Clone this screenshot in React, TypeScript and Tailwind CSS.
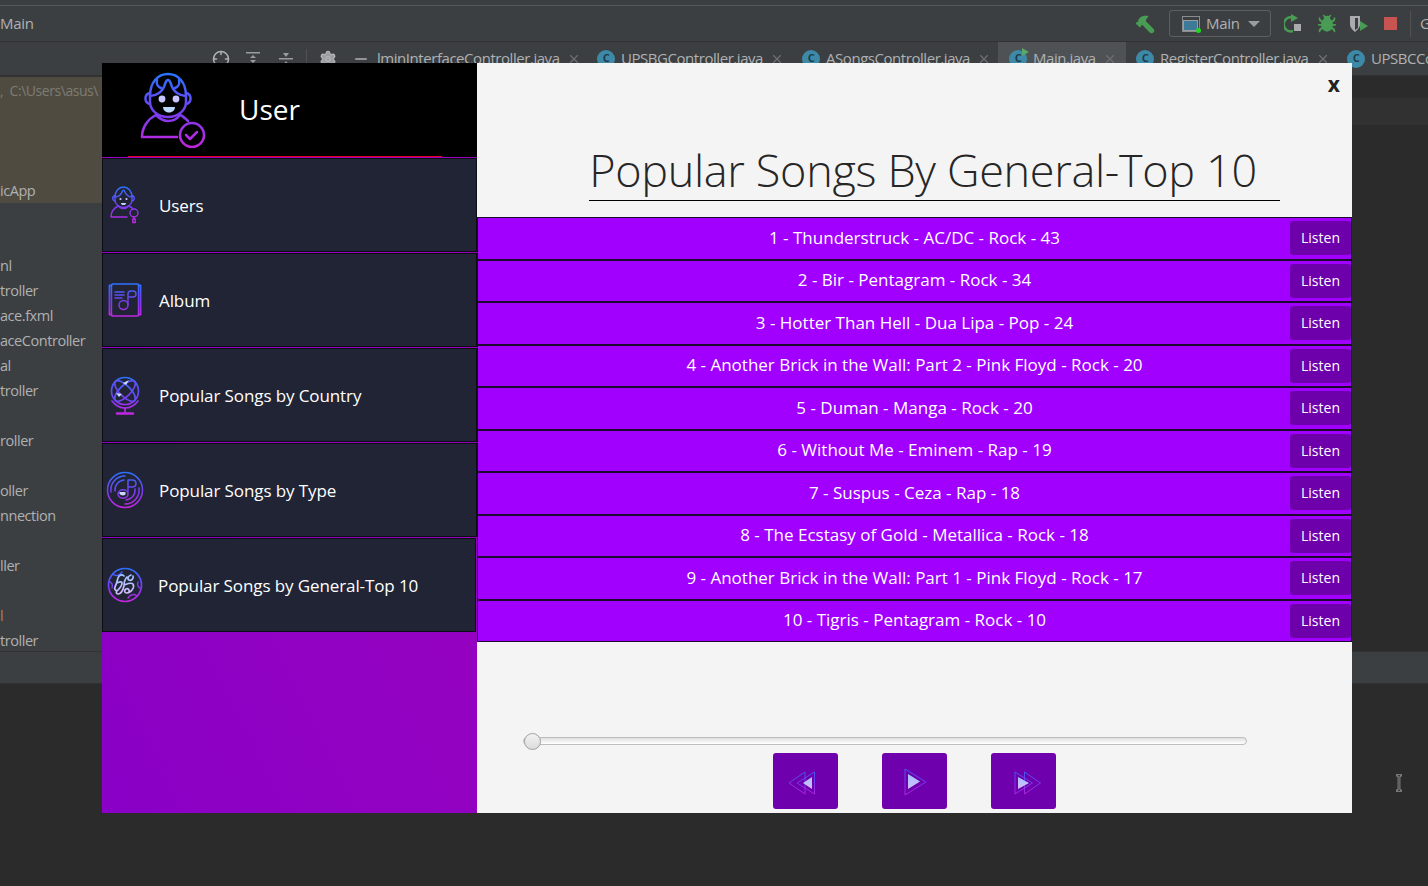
import type { ReactNode } from "react";
import { Hammer, Bug, Settings, Minus, Crosshair, X } from "lucide-react";

const songs = [
  "1 - Thunderstruck - AC/DC - Rock - 43",
  "2 - Bir - Pentagram - Rock - 34",
  "3 - Hotter Than Hell - Dua Lipa - Pop - 24",
  "4 - Another Brick in the Wall: Part 2 - Pink Floyd - Rock - 20",
  "5 - Duman - Manga - Rock - 20",
  "6 - Without Me - Eminem - Rap - 19",
  "7 - Suspus - Ceza - Rap - 18",
  "8 - The Ecstasy of Gold - Metallica - Rock - 18",
  "9 - Another Brick in the Wall: Part 1 - Pink Floyd - Rock - 17",
  "10 - Tigris - Pentagram - Rock - 10",
];

const treeRows = [
  { text: "nl", cls: "" },
  { text: "troller", cls: "" },
  { text: "ace.fxml", cls: "" },
  { text: "aceController", cls: "" },
  { text: "al", cls: "" },
  { text: "troller", cls: "" },
  { text: "", cls: "" },
  { text: "roller", cls: "" },
  { text: "", cls: "" },
  { text: "oller", cls: "" },
  { text: "nnection", cls: "" },
  { text: "", cls: "" },
  { text: "ller", cls: "" },
  { text: "", cls: "" },
  { text: "l", cls: "text-[#b0805a]" },
  { text: "troller", cls: "" },
];

const tabs = [
  { name: "lminInterfaceController.java", cls: "w-[213px] pl-0", icon: false, active: false },
  { name: "UPSBGController.java", cls: "w-[205px] pl-[7px]", icon: true, active: false },
  { name: "ASongsController.java", cls: "w-[203px] pl-[7px]", icon: true, active: false },
  { name: "Main.java", cls: "w-[128px] pl-[11px] bg-[#4e5254]", icon: true, active: true },
  { name: "RegisterController.java", cls: "w-[215px] pl-[10px]", icon: true, active: false },
  { name: "UPSBCController.java", cls: "w-[200px] pl-[6px]", icon: true, active: false },
];

function Grad({ id, y1, y2 }: { id: string; y1: number; y2: number }) {
  return (
    <defs>
      <linearGradient id={id} gradientUnits="userSpaceOnUse" x1="0" x2="0" y1={y1} y2={y2}>
        <stop offset="0" stopColor="#2a73ff" />
        <stop offset="0.55" stopColor="#7a3cf0" />
        <stop offset="1" stopColor="#c426e0" />
      </linearGradient>
      <linearGradient id={`${id}-f`} gradientUnits="userSpaceOnUse" x1="0" x2="0" y1={y1} y2={y2}>
        <stop offset="0" stopColor="#8fc7ff" />
        <stop offset="1" stopColor="#e8b8ff" />
      </linearGradient>
    </defs>
  );
}

function UserIcon() {
  return (
    <svg viewBox="0 0 66 76" className="w-[66px] h-[76px]" fill="none" stroke="url(#gu)" strokeWidth="2.500" strokeLinecap="round" strokeLinejoin="round">
      <Grad id="gu" y1={2} y2={74} />
      <path d="M10 24C10 10 18 2 28 2s18 8 18 22v6a18 15 0 0 1-36 0z" />
      <path d="M10 24c6 0 13-4 15-12 1-3 2-4 3-4s2 1 3 4c2 8 9 12 15 12" />
      <path d="M17 8c-1 4 1 7 4 8M39 8c1 4-1 7-4 8" />
      <path d="M10 21a5.600 5.600 0 0 0 0 11M46 21a5.600 5.600 0 0 1 0 11" />
      <circle cx="22" cy="27" r="3.400" fill="#c8c6ff" stroke="none" />
      <circle cx="36" cy="27" r="3.400" fill="#c8c6ff" stroke="none" />
      <path d="M23 35h12c0 3-2.500 5.500-6 5.500s-6-2.500-6-5.500z" fill="#bcd8ff" stroke="none" />
      <path d="M16 43c4 4 8 6 12 6s9-2 12-6" />
      <path d="M16 43C8 47 2 55 2 65h35M40 43c3 1 6 4 8 6" />
      <circle cx="52" cy="63" r="12" />
      <path d="M46 63l4 4 7-7" />
    </svg>
  );
}

function UsersIcon() {
  return (
    <svg viewBox="0 0 30 38" className="w-[30px] h-[38px]" fill="none" stroke="url(#gs)" strokeWidth="1.400" strokeLinecap="round" strokeLinejoin="round">
      <Grad id="gs" y1={1} y2={37} />
      <path d="M5 11C5 5 9 1 13.500 1S22 5 22 11v3a8.500 7.500 0 0 1-17 0z" />
      <path d="M5 11c3 0 6-2 7.500-6 .5-1 1.500-1 2 0 1.500 4 4.500 6 7.500 6" />
      <path d="M5 9.500a2.800 2.800 0 0 0 0 5.500M22 9.500a2.800 2.800 0 0 1 0 5.500" />
      <circle cx="10.500" cy="13" r="1.100" fill="#c8c6ff" stroke="none" />
      <circle cx="16.500" cy="13" r="1.100" fill="#c8c6ff" stroke="none" />
      <path d="M11 17h5c0 1.500-1 2-2.500 2s-2.500-.5-2.500-2z" fill="#bcd8ff" stroke="none" />
      <path d="M8 20c2 2 4 2.500 5.500 2.500S17 22 19 20" />
      <path d="M8 20c-4 2-7 5-7 11h16M19 20c1 .5 3 1.500 4 3" />
      <circle cx="24" cy="27" r="4" />
      <path d="M24 31v2" />
      <rect x="22.800" y="33" width="2.400" height="3.500" />
    </svg>
  );
}

function AlbumIcon() {
  return (
    <svg viewBox="0 0 34 34" className="w-[34px] h-[34px]" fill="none" stroke="url(#ga)" strokeWidth="1.400" strokeLinecap="round" strokeLinejoin="round">
      <Grad id="ga" y1={0} y2={34} />
      <rect x="3.500" y="1" width="27" height="32" rx="1" />
      <path d="M3.500 2.500H1.500v29h2M30.500 2.500h2v29h-2" strokeWidth="1.800" />
      <path d="M7 9h9M7 12h9M7 15h7" />
      <path d="M20 22V11c0-2 1-3 3-3h2c2 0 3 1.500 3 3s-1 3-3 3h-5" />
      <circle cx="15.500" cy="22" r="4.500" />
    </svg>
  );
}

function GlobeIcon() {
  return (
    <svg viewBox="0 0 34 40" className="w-[34px] h-[40px]" fill="none" stroke="url(#gg)" strokeWidth="1.700" strokeLinecap="round" strokeLinejoin="round">
      <Grad id="gg" y1={2} y2={40} />
      <circle cx="17" cy="16" r="13.500" />
      <ellipse cx="17" cy="16" rx="13.500" ry="5.500" transform="rotate(-45 17 16)" />
      <ellipse cx="17" cy="16" rx="13.500" ry="5.500" transform="rotate(45 17 16)" />
      <path d="M15 8l6-3-3 5z" fill="#c8d8ff" stroke="none" />
      <path d="M11 22l-3-4 6 1z" fill="#c8d8ff" stroke="none" />
      <path d="M4 26c3 4 8 7 13 7s10-3 13-7" />
      <path d="M17 33v4" />
      <path d="M9 38.500h16" strokeWidth="2.400" />
    </svg>
  );
}

function VinylIcon() {
  return (
    <svg viewBox="0 0 38 38" className="w-[38px] h-[38px]" fill="none" stroke="url(#gv)" strokeWidth="1.500" strokeLinecap="round" strokeLinejoin="round">
      <Grad id="gv" y1={1} y2={37} />
      <circle cx="19" cy="19" r="17.500" />
      <path d="M5 21A14 14 0 0 1 19 5M9 20A10 10 0 0 1 18 9" />
      <path d="M33 17A14 14 0 0 1 19 33M29 18A10 10 0 0 1 20 29" />
      <path d="M22 21V9h4c2.500 0 4 1.500 4 3.500S28.500 16 26 16h-4" />
      <ellipse cx="17" cy="23" rx="5" ry="4.200" />
      <path d="M13.500 21h6v2.500c-2 1.500-4.500 1-6-.5z" fill="#cfd6ff" stroke="none" />
    </svg>
  );
}

function GeIcon() {
  return (
    <svg viewBox="0 0 36 36" className="w-[36px] h-[36px]" fill="none" strokeLinecap="round" strokeLinejoin="round">
      <Grad id="ge" y1={1} y2={35} />
      <circle cx="18" cy="18" r="16.500" stroke="url(#ge)" strokeWidth="1.700" />
      <path d="M6 7c3 3 7 1 9-2M30 29c-3-3-7-1-9 2M3 15c2 1 3 3 2 6M33 21c-2-1-3-3-2-6" stroke="url(#ge)" strokeWidth="1.400" />
      <path d="M17 9c-2-2-5-1-6 2-1 4-2 7-3 9s1 5 3 3 4-5 4-7-3-1-5 0M20 10c-2 2-3 6-3 9-1 4-3 8-6 8-2 0-2-2-1-3M24 8c-3 1-4 4-2 5s5-1 4-4M17 18c3-1 7-3 9-1 2 3-2 9-6 9-3 0-3-3-1-4 2-1 4 1 3 3" stroke="url(#ge-f)" strokeWidth="1.700" />
    </svg>
  );
}

function PlayerIcon({ kind }: { kind: "prev" | "play" | "next" }) {
  const id = `p-${kind}`;
  return (
    <svg viewBox="0 0 65 56" className="w-full h-full" fill="none" stroke={`url(#${id})`} strokeWidth="0.900">
      <Grad id={id} y1={14} y2={44} />
      {kind === "prev" && (
        <>
          <path d="M16 30l16-11v22z" />
          <path d="M24 30l17.500-11v22z" />
          <path d="M39 24v12l-9-6z" fill={`url(#${id}-f)`} stroke="none" />
        </>
      )}
      {kind === "play" && (
        <>
          <path d="M23 16v26l21-13z" />
          <path d="M26 21v15l12-7.500z" fill={`url(#${id}-f)`} stroke="none" />
        </>
      )}
      {kind === "next" && (
        <>
          <path d="M49.500 30l-16-11v22z" />
          <path d="M41.500 30L24 19v22z" />
          <path d="M27 24v12l11-6z" fill={`url(#${id}-f)`} stroke="none" />
        </>
      )}
    </svg>
  );
}

function MenuItem({ icon, label, cls }: { icon: ReactNode; label: string; cls: string }) {
  return (
    <div className={`flex items-center h-[94px] mb-px bg-[#212435] border border-[#0c0c14] text-[17px] tracking-[-0.1px] text-white ${cls}`}>
      <div className="w-[44px] mr-[12px] flex justify-center shrink-0">{icon}</div>
      <span className="pt-[2px]">{label}</span>
    </div>
  );
}

function TabIcon({ active }: { active: boolean }) {
  return (
    <span className="relative w-[18px] h-[18px] rounded-full bg-[#3d8aa8] flex items-center justify-center text-[11px] font-bold text-[#1f3a4a] shrink-0 mr-[6px]">
      C
      {active && <span className="absolute -top-[2px] -right-[2px] w-0 h-0 border-y-[4px] border-y-transparent border-l-[7px] border-l-[#59a869]" />}
    </span>
  );
}

export default function App() {
  return (
    <div
      className="relative w-[1428px] h-[886px] overflow-hidden flex flex-col bg-[#2b2b2b] text-[#afb1b3]"
      style={{ fontFamily: '"Open Sans", "Noto Sans", sans-serif' }}
    >
      <div className="h-[6px] bg-[#3c3f41] border-b border-[#555759]" />

      <div className="h-[36px] bg-[#3c3f41] border-b border-[#323232] flex items-center text-[15px] tracking-[-0.3px]">
        <span>Main</span>
        <div className="ml-auto flex items-center">
          <Hammer size={20} className="text-[#499c54] -scale-x-100 mr-[14px]" fill="#499c54" />
          <div className="w-[102px] h-[27px] border border-[#5e6060] rounded-[3px] flex items-center pl-[12px] gap-[6px] mr-[13px]">
            <span className="relative w-[18px] h-[16px] border border-[#8a8d90] shrink-0">
              <span className="absolute left-0 bottom-0 w-[15px] h-[11px] bg-[#3d7a98] border border-[#9a9da0]" />
              <span className="absolute -right-[2px] -bottom-[2px] w-[5px] h-[5px] rounded-full bg-[#22d622]" />
            </span>
            <span>Main</span>
            <span className="ml-[2px] w-0 h-0 border-x-[6px] border-x-transparent border-t-[6px] border-t-[#9a9da0]" />
          </div>
          <svg viewBox="0 0 20 20" className="w-[20px] h-[20px] mr-[13px]">
            <path d="M8 3.500A7 7 0 1 0 9 17" fill="none" stroke="#499c54" strokeWidth="2.500" />
            <path d="M7 0l7 4-7 4z" fill="#499c54" />
            <rect x="10" y="10" width="7" height="7" fill="#a9abad" />
          </svg>
          <Bug size={20} className="text-[#499c54] mr-[12px]" fill="#499c54" />
          <svg viewBox="0 0 20 20" className="w-[20px] h-[20px] mr-[15px]">
            <path d="M1 2h10v8c0 4-3 6-5 8-2-2-5-4-5-8z" fill="#a9abad" />
            <path d="M6 4h3v10l-3 2z" fill="#3c3f41" />
            <path d="M11 7l8 5-8 5z" fill="#499c54" />
          </svg>
          <span className="w-[13px] h-[13px] bg-[#c75450] mr-[13px]" />
          <span className="w-px h-[26px] bg-[#515151] mr-[9px]" />
          <span className="w-[8px] overflow-hidden">G</span>
        </div>
      </div>

      <div className="h-[34px] bg-[#3c3f41] border-b border-[#323232] flex items-center pl-[212px] text-[15px] tracking-[-0.45px] overflow-hidden">
        <Crosshair size={18} className="shrink-0 mr-[15px]" />
        <svg viewBox="0 0 16 16" className="w-[16px] h-[16px] shrink-0 mr-[17px]" fill="#9a9da0">
          <path d="M1 1h14v1.500H1zM1 13.500h14V15H1zM8 4l3 3H5zM8 12l3-3H5z" />
        </svg>
        <svg viewBox="0 0 16 16" className="w-[16px] h-[16px] shrink-0 mr-[12px]" fill="#9a9da0">
          <path d="M1 7h14v1.500H1zM8 6L5 2h6zM8 10l3 4H5z" />
        </svg>
        <span className="w-px h-[20px] bg-[#515151] shrink-0 mr-[12px]" />
        <Settings size={18} fill="#9a9da0" className="shrink-0 mr-[15px]" />
        <Minus size={18} className="shrink-0 mr-[7px]" />
        {tabs.map((t) => (
          <div key={t.name} className={`h-full flex items-center shrink-0 ${t.cls}`}>
            {t.icon && <TabIcon active={t.active} />}
            <span className="whitespace-nowrap">{t.name}</span>
            <X size={14} className="ml-[7px] text-[#6e7072]" />
          </div>
        ))}
      </div>

      <div className="h-[575px] flex">
        <div className="w-[102px] shrink-0 bg-[#3c3f41] text-[14.5px] tracking-[-0.45px] overflow-hidden">
          <div className="h-[127px] bg-[#4f4b41] border-t border-[#323232] flex flex-col justify-between pt-[3px] whitespace-nowrap">
            <span className="text-[#7d7c73] text-[14px]">,&nbsp;&nbsp;C:\Users\asus\</span>
            <span className="h-[25px] flex items-center">icApp</span>
          </div>
          <div className="mt-[50px]">
            {treeRows.map((r, i) => (
              <div key={i} className={`h-[25px] flex items-center whitespace-nowrap ${r.cls}`}>
                {r.text}
              </div>
            ))}
          </div>
        </div>
        <div className="flex-1 flex flex-col">
          <div className="h-[22px]" />
          <div className="h-[27px] bg-[#313131]" />
        </div>
      </div>

      <div className="h-[33px] bg-[#3c3f41] border-t border-[#323232] border-b-[#2f3133] border-b" />

      <div className="absolute left-[102px] top-[63px] w-[1250px] h-[750px] flex">
        <div className="w-[375px] shrink-0 flex flex-col bg-gradient-to-tr from-[#8a00c6] to-[#9c00bc]">
          <div className="relative h-[94px] mb-px bg-black flex items-center pl-[38px] shrink-0">
            <UserIcon />
            <span className="ml-[33px] text-[28px] text-white -mt-[3px]">User</span>
            <span className="absolute left-[26px] bottom-0 w-[314px] h-px bg-[#e00020]" />
          </div>
          <MenuItem icon={<UsersIcon />} label="Users" cls="" />
          <MenuItem icon={<AlbumIcon />} label="Album" cls="" />
          <MenuItem icon={<GlobeIcon />} label="Popular Songs by Country" cls="" />
          <MenuItem icon={<VinylIcon />} label="Popular Songs by Type" cls="" />
          <MenuItem icon={<GeIcon />} label="Popular Songs by General-Top 10" cls="w-[374px] [&>span]:-ml-[1px]" />
        </div>

        <div className="flex-1 flex flex-col bg-[#f4f4f4]">
          <div className="h-[154px] flex flex-col shrink-0">
            <div className="flex justify-end pr-[12px] pt-[6px] h-[44px]">
              <span className="text-[21px] font-bold text-[#222]">x</span>
            </div>
            <div className="ml-[112px] w-[691px] h-[94px] border-b border-black flex items-end justify-center pr-[23px] text-[45px] font-light tracking-[-0.33px] text-[#262626] leading-[60px]">
              <span className="whitespace-nowrap">Popular Songs By General-Top 10</span>
            </div>
          </div>

          <div className="h-[425px] flex flex-col shrink-0 bg-[#1c0a2e]">
            {songs.map((s) => (
              <div key={s} className="h-[42.5px] grid grid-cols-[62px_1fr_62px] items-center bg-[#a100ff] border border-[#1c0a2e] text-[17px] text-white">
                <span />
                <span className="text-center whitespace-nowrap pb-[2px]">{s}</span>
                <button className="h-[34px] rounded-[3px] bg-[#6e00ac] text-[14px] text-white ml-[1px] pb-px">Listen</button>
              </div>
            ))}
          </div>

          <div className="flex-1 flex flex-col items-center">
            <div className="relative self-start w-[724px] h-[8px] mt-[95px] ml-[46px] rounded-full border border-[#bdbdbd] bg-gradient-to-b from-[#e0e0e0] to-white">
              <span className="absolute left-0 -top-[5px] w-[17px] h-[17px] rounded-full border border-[#a0a0a0] bg-gradient-to-b from-[#f2f2f2] to-[#dcdcdc]" />
            </div>
            <div className="flex gap-[44px] mt-[8px]">
              <button className="w-[65px] h-[56px] rounded-[3px] bg-[#6f00ad]"><PlayerIcon kind="prev" /></button>
              <button className="w-[65px] h-[56px] rounded-[3px] bg-[#6f00ad]"><PlayerIcon kind="play" /></button>
              <button className="w-[65px] h-[56px] rounded-[3px] bg-[#6f00ad]"><PlayerIcon kind="next" /></button>
            </div>
          </div>
        </div>
      </div>

      <svg viewBox="0 0 8 18" className="absolute left-[1395px] top-[774px] w-[8px] h-[18px]" fill="none" strokeWidth="1.200">
        <path d="M1 1h6M1 17h6M4 1v16" stroke="#dddddd" strokeWidth="2.400" />
        <path d="M1 1h6M1 17h6M4 1v16" stroke="#111111" />
      </svg>
    </div>
  );
}
